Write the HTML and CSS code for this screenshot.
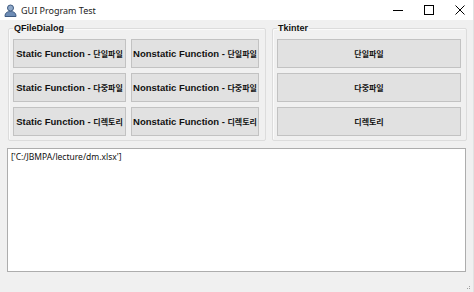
FILE: index.html
```html
<!DOCTYPE html>
<html lang="ko">
<head>
    <meta charset="UTF-8">
    <title>GUI Program Test</title>
    <link rel="stylesheet" href="styles.css">
</head>
<body>
    <div class="window">
        <div class="titlebar">
            <svg class="app-icon" width="13" height="13" viewBox="0 0 13 13">
                <circle cx="6.5" cy="4" r="3" fill="#8fa8c8" stroke="#3d5a80" stroke-width="1"/>
                <path d="M1 12.5 C1 8.5 3.5 7.5 6.5 7.5 C9.5 7.5 12 8.5 12 12.5 Z" fill="#6d8cb5" stroke="#3d5a80" stroke-width="1"/>
            </svg>
            <span class="title">GUI Program Test</span>
            <div class="controls">
                <svg width="10" height="10" viewBox="0 0 10 10"><path d="M0 5.5 H10" stroke="#000" stroke-width="1"/></svg>
                <svg width="10" height="10" viewBox="0 0 10 10"><rect x="0.5" y="0.5" width="9" height="9" fill="none" stroke="#000" stroke-width="1"/></svg>
                <svg width="10" height="10" viewBox="0 0 10 10"><path d="M0.5 0.5 L9.5 9.5 M9.5 0.5 L0.5 9.5" stroke="#000" stroke-width="1"/></svg>
            </div>
        </div>

        <div class="groups">
            <!-- QFileDialog -->
            <fieldset class="group qt">
                <legend>QFileDialog</legend>
                <div class="grid">
                    <button>Static Function - <span class="ko">단일파일</span></button>
                    <button>Nonstatic Function - <span class="ko">단일파일</span></button>
                    <button>Static Function - <span class="ko">다중파일</span></button>
                    <button>Nonstatic Function - <span class="ko">다중파일</span></button>
                    <button>Static Function - <span class="ko">디렉토리</span></button>
                    <button>Nonstatic Function - <span class="ko">디렉토리</span></button>
                </div>
            </fieldset>

            <!-- Tkinter -->
            <fieldset class="group tk">
                <legend>Tkinter</legend>
                <div class="stack">
                    <button><span class="ko">단일파일</span></button>
                    <button><span class="ko">다중파일</span></button>
                    <button><span class="ko">디렉토리</span></button>
                </div>
            </fieldset>
        </div>

        <div class="output">['C:/JBMPA/lecture/dm.xlsx']</div>

        <div class="statusbar">
            <svg class="grip" width="4" height="4" viewBox="0 0 4 4">
                <rect x="2" y="0" width="1" height="1" fill="#a0a0a0"/>
                <rect x="0" y="2" width="1" height="1" fill="#a0a0a0"/>
                <rect x="2" y="2" width="1" height="1" fill="#a0a0a0"/>
            </svg>
        </div>
    </div>
</body>
</html>
```

FILE: styles.css
```css
body {
    margin: 0;
    background-color: #f0f0f0;
    font-family: "Liberation Sans", "Noto Sans CJK KR", sans-serif;
}

.window {
    width: 474px;
    height: 292px;
    display: flex;
    flex-direction: column;
    box-sizing: border-box;
    border-right: 1px solid #e2e2e2;
}

.titlebar {
    height: 20px;
    background: white;
    display: flex;
    align-items: center;
    flex-shrink: 0;
}

.app-icon {
    margin-left: 4px;
    margin-right: 4px;
}

.title {
    font-family: "Noto Sans", sans-serif;
    font-size: 9px;
    color: #222;
}

.controls {
    margin-left: auto;
    margin-right: 8px;
    display: flex;
    gap: 21px;
    align-items: center;
}

.groups {
    display: flex;
    gap: 6px;
    margin-top: 3px;
    padding-left: 8px;
}

.group {
    margin: 0;
    border: 1px solid #dcdcdc;
    border-radius: 2px;
    box-shadow: inset 1px 1px 0 #fafafa;
    padding: 5px 5px 4px 4px;
    box-sizing: border-box;
}

.group legend {
    font-size: 9px;
    font-weight: bold;
    color: #111;
    padding: 0 1px;
    margin-left: 0;
    line-height: 11px;
}

.qt {
    width: 258px;
}

.tk {
    width: 195px;
}

.grid {
    display: grid;
    grid-template-columns: 113px 128px;
    grid-auto-rows: 29px;
    column-gap: 5px;
    row-gap: 5px;
}

.stack {
    display: grid;
    grid-auto-rows: 29px;
    row-gap: 5px;
}

button {
    margin: 0;
    padding: 0;
    background-color: #e1e1e1;
    border: 1px solid #c2c2c2;
    font-family: "Liberation Sans", "Noto Sans CJK KR", sans-serif;
    font-size: 9.5px;
    font-weight: bold;
    color: #111;
    white-space: nowrap;
}

.ko {
    font-family: "Noto Sans CJK KR", sans-serif;
    font-size: 8px;
    font-weight: bold;
}

.output {
    margin: 7px 7px 0 7px;
    height: 124px;
    background: white;
    border: 1px solid #adadad;
    box-sizing: border-box;
    padding: 2px 3px;
    font-family: "Noto Sans", sans-serif;
    font-size: 8.5px;
    color: #111;
    flex-shrink: 0;
}

.statusbar {
    flex: 1;
    display: flex;
    justify-content: flex-end;
    align-items: flex-end;
    padding: 0 2px 2px 0;
}
```
